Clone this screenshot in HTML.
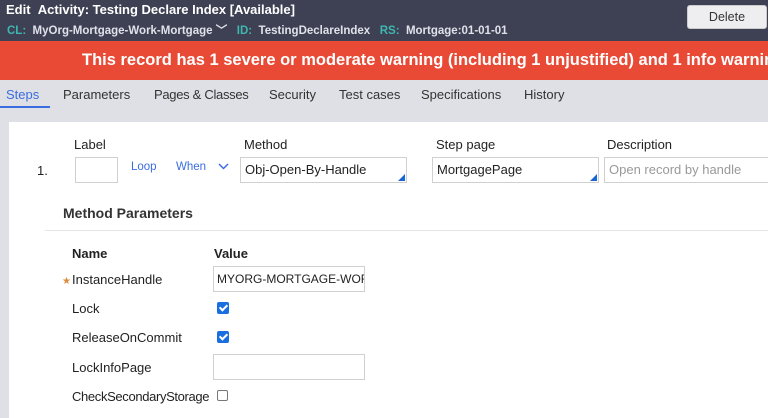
<!DOCTYPE html>
<html><head><style>
*{margin:0;padding:0;box-sizing:border-box}
body{width:768px;height:418px;overflow:hidden;background:#dfe0e5;font-family:"Liberation Sans",sans-serif;position:relative;color:#222}
.a{position:absolute;white-space:nowrap}
.hdr{position:absolute;left:0;top:0;width:768px;height:41px;background:#3e4053}
.red{position:absolute;left:0;top:41px;width:768px;height:39px;background:#e84a36}
.panel{position:absolute;left:9px;top:122px;width:759px;height:296px;background:#fff}
.inp{position:absolute;border:1px solid #d0d0d0;background:#fff;font-size:13px;padding:0 4px;line-height:24px}
.tri{position:absolute;right:1px;bottom:1px;width:0;height:0;border-left:7px solid transparent;border-bottom:7px solid #1a66d6}
.cb{position:absolute;width:12px;height:12px;border-radius:2px;background:#1a6fe0}
.cb:after{content:"";position:absolute;left:4px;top:1px;width:3px;height:6px;border:solid #fff;border-width:0 2px 2px 0;transform:rotate(45deg)}
</style></head><body>
<div class="hdr"></div>
<div class="a" style="left:6px;top:2px;color:#fff;font-size:13px;font-weight:bold">Edit &nbsp;Activity: Testing Declare Index [Available]</div>
<div class="a" style="left:7px;top:22px;font-size:11.5px;font-weight:bold;color:#dfe2ea"><span style="color:#3fb6b0">CL:</span>&nbsp; MyOrg-Mortgage-Work-Mortgage ﹀ &nbsp;&nbsp;<span style="color:#3fb6b0">ID:</span>&nbsp; TestingDeclareIndex &nbsp;&nbsp;<span style="color:#3fb6b0">RS:</span>&nbsp; Mortgage:01-01-01</div>
<div class="a" style="left:687px;top:5px;width:80px;height:24px;background:#eeeef0;border-radius:3px;border:1px solid #ccc;text-align:center;line-height:22px;font-size:12.5px;color:#333">Delete</div>
<div class="red"></div>
<div class="a" style="left:82px;top:51px;color:#fff;font-size:16.5px;font-weight:bold">This record has 1 severe or moderate warning (including 1 unjustified) and 1 info warning</div>
<div class="a" style="left:6px;top:87px;font-size:13px;color:#3a6de0">Steps</div>
<div class="a" style="left:0;top:106px;width:50px;height:2px;background:#3a6de0"></div>
<div class="a" style="left:63px;top:87px;font-size:13px;color:#333">Parameters</div>
<div class="a" style="left:154px;top:87px;font-size:13px;color:#333;letter-spacing:-.3px">Pages &amp; Classes</div>
<div class="a" style="left:269px;top:87px;font-size:13px;color:#333">Security</div>
<div class="a" style="left:339px;top:87px;font-size:13px;color:#333">Test cases</div>
<div class="a" style="left:421px;top:87px;font-size:13px;color:#333">Specifications</div>
<div class="a" style="left:524px;top:87px;font-size:13px;color:#333">History</div>
<div class="panel"></div>
<div class="a" style="left:74px;top:137px;font-size:13px">Label</div>
<div class="a" style="left:244px;top:137px;font-size:13px">Method</div>
<div class="a" style="left:436px;top:137px;font-size:13px">Step page</div>
<div class="a" style="left:607px;top:137px;font-size:13px">Description</div>
<div class="a" style="left:37px;top:163px;font-size:13px">1.</div>
<div class="inp" style="left:75px;top:157px;width:43px;height:26px"></div>
<div class="a" style="left:131px;top:161px;font-size:11.5px;color:#3a6de0">Loop</div>
<div class="a" style="left:176px;top:161px;font-size:11.5px;color:#3a6de0">When</div>
<svg class="a" style="left:218px;top:163px" width="11" height="8"><path d="M1 1l4.5 4.5L10 1" stroke="#3a6de0" stroke-width="1.5" fill="none"/></svg>
<div class="inp" style="left:240px;top:157px;width:167px;height:26px">Obj-Open-By-Handle<div class="tri"></div></div>
<div class="inp" style="left:432px;top:157px;width:167px;height:26px">MortgagePage<div class="tri"></div></div>
<div class="inp" style="left:604px;top:157px;width:170px;height:26px;color:#999">Open record by handle</div>
<div class="a" style="left:63px;top:205px;font-size:14px;font-weight:bold;color:#333">Method Parameters</div>
<div class="a" style="left:45px;top:230px;width:723px;height:1px;background:#e5e5e8"></div>
<div class="a" style="left:72px;top:246px;font-size:13px;font-weight:bold">Name</div>
<div class="a" style="left:214px;top:246px;font-size:13px;font-weight:bold">Value</div>
<div class="a" style="left:62px;top:276px;font-size:10px;color:#e08a3c">★</div>
<div class="a" style="left:72px;top:272px;font-size:13px">InstanceHandle</div>
<div class="inp" style="left:213px;top:266px;width:152px;height:26px;overflow:hidden;font-size:12px;padding:0 3px;white-space:nowrap">MYORG-MORTGAGE-WORK</div>
<div class="a" style="left:72px;top:301px;font-size:13px">Lock</div>
<div class="cb" style="left:217px;top:302px"></div>
<div class="a" style="left:72px;top:330px;font-size:13px">ReleaseOnCommit</div>
<div class="cb" style="left:217px;top:331px"></div>
<div class="a" style="left:72px;top:360px;font-size:13px">LockInfoPage</div>
<div class="inp" style="left:213px;top:354px;width:152px;height:26px"></div>
<div class="a" style="left:72px;top:389px;font-size:13px;letter-spacing:-.35px">CheckSecondaryStorage</div>
<div class="a" style="left:217px;top:390px;width:11px;height:11px;border:1px solid #777;border-radius:2px"></div>
</body></html>
